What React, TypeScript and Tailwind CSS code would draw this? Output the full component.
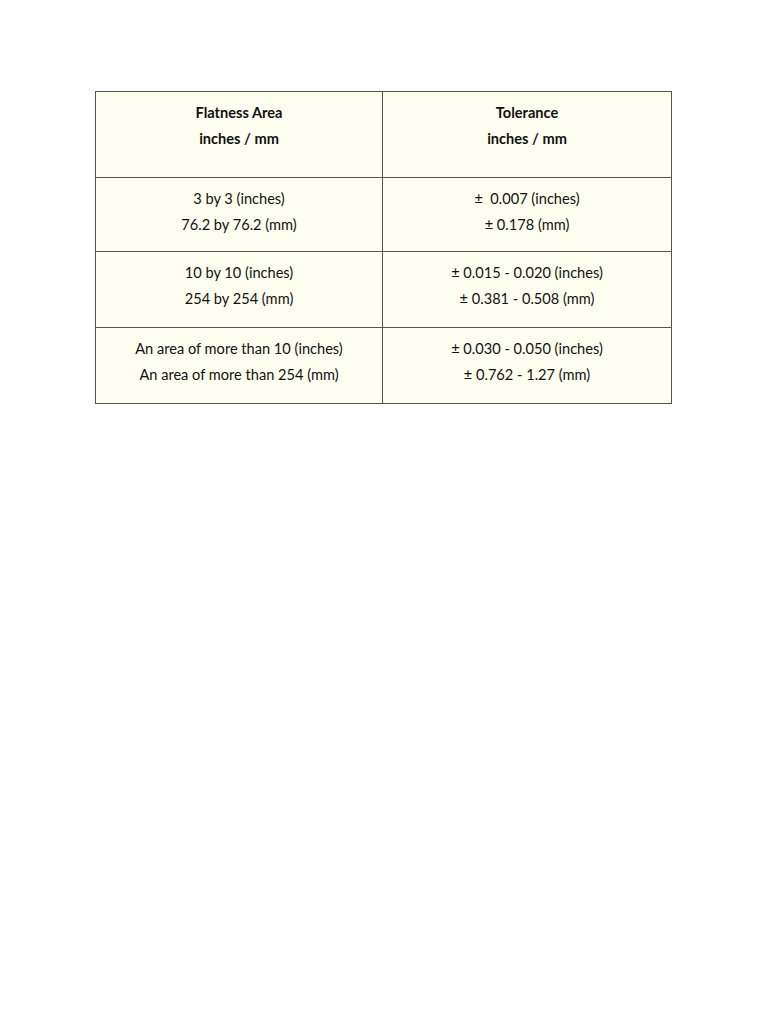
const rows = [
  { area: ["3 by 3 (inches)", "76.2 by 76.2 (mm)"], tol: ["±  0.007 (inches)", "± 0.178 (mm)"], h: "h-[74px]" },
  { area: ["10 by 10 (inches)", "254 by 254 (mm)"], tol: ["± 0.015 - 0.020 (inches)", "± 0.381 - 0.508 (mm)"], h: "h-[76px]" },
  {
    area: ["An area of more than 10 (inches)", "An area of more than 254 (mm)"],
    tol: ["± 0.030 - 0.050 (inches)", "± 0.762 - 1.27 (mm)"],
    h: "h-[75px]",
  },
];

function Cell({ lines, bold, right }: { lines: string[]; bold?: boolean; right?: boolean }) {
  return (
    <div
      className={`flex flex-col items-center pt-[8px] ${right ? "" : "border-r border-[#55554c]"} ${
        bold ? "font-bold" : ""
      }`}
    >
      {lines.map((l) => (
        <span key={l} className="whitespace-pre leading-[26px]">
          {l}
        </span>
      ))}
    </div>
  );
}

export default function App() {
  return (
    <div className="min-h-[1024px] bg-white pt-[91px] pl-[95px]">
      <div className="w-[577px] border border-[#55554c] bg-[#fefef0] font-['Lato',sans-serif] text-[14.6px] text-[#111]">
        <div className="grid h-[86px] grid-cols-[287px_1fr] border-b border-[#55554c]">
          <Cell lines={["Flatness Area", "inches / mm"]} bold />
          <Cell lines={["Tolerance", "inches / mm"]} bold right />
        </div>
        {rows.map((r, i) => (
          <div
            key={i}
            className={`grid grid-cols-[287px_1fr] ${r.h} ${i < rows.length - 1 ? "border-b border-[#55554c]" : ""}`}
          >
            <Cell lines={r.area} />
            <Cell lines={r.tol} right />
          </div>
        ))}
      </div>
    </div>
  );
}
